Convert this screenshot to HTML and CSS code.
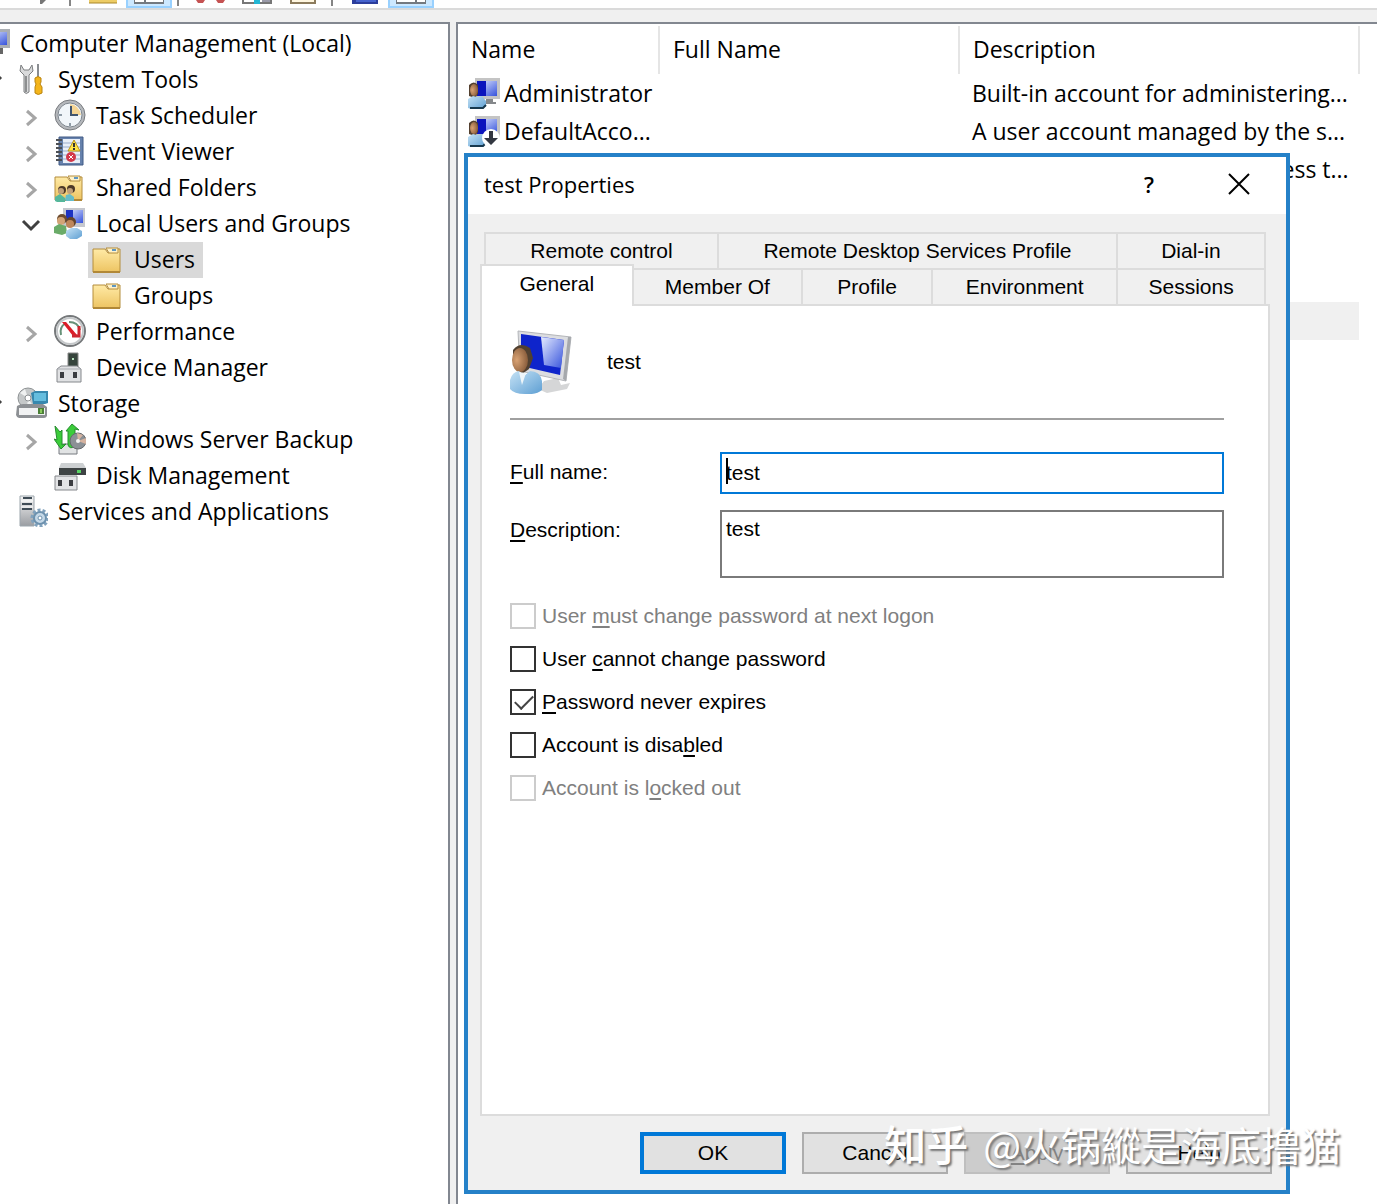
FILE: index.html
```html
<!DOCTYPE html>
<html lang="en">

<head>
  <meta charset="UTF-8" />
  <meta name="viewport" content="width=device-width, initial-scale=1" />
  <title>Computer Management</title>
  <link rel="stylesheet" href="styles.css">
</head>

<body>
  <!-- shared icons -->
  <svg class="sprite" aria-hidden="true">
    <defs>
      <linearGradient id="gScreen" x1="0" y1="0" x2="1" y2="1">
        <stop offset="0" stop-color="#e6ecff" />
        <stop offset="1" stop-color="#3552dc" />
      </linearGradient>
      <linearGradient id="gFolder" x1="0" y1="0" x2="0" y2="1">
        <stop offset="0" stop-color="#ffeaa6" />
        <stop offset="1" stop-color="#edc462" />
      </linearGradient>
      <linearGradient id="gShirt" x1="0" y1="0" x2="1" y2="1">
        <stop offset="0" stop-color="#c5e2f5" />
        <stop offset="1" stop-color="#5e9fd3" />
      </linearGradient>
      <linearGradient id="gMetal" x1="0" y1="0" x2="0" y2="1">
        <stop offset="0" stop-color="#f4f4f4" />
        <stop offset="1" stop-color="#9a9da2" />
      </linearGradient>
      <radialGradient id="gFace" cx="0.3" cy="0.5" r="0.8">
        <stop offset="0" stop-color="#d9a273" />
        <stop offset="1" stop-color="#7c5233" />
      </radialGradient>
    </defs>
    <symbol id="i-right" viewBox="0 0 16 20">
      <path d="M4 4l8 7-8 7" fill="none" stroke="#a6a6a6" stroke-width="3" />
    </symbol>
    <symbol id="i-down" viewBox="0 0 20 16">
      <path d="M2 4l8 8 8-8" fill="none" stroke="#404040" stroke-width="3" />
    </symbol>
    <symbol id="i-user" viewBox="0 0 32 32">
      <path d="M7 1h25v21H7z" fill="#c4c4c4" />
      <path d="M9 4h20v15H9z" fill="url(#gScreen)" />
      <path d="M9 4h9v15H9z" fill="#0b14bd" />
      <path d="M18 22h7v3h3v2H15v-2h3z" fill="#85888b" />
      <path d="M1 8q5-5 9 0v9l-3 4-6-2z" fill="#54402f" />
      <ellipse cx="6" cy="13" rx="4" ry="6" fill="url(#gFace)" />
      <path d="M0 31v-9l5-3 4 1 5-1 4 5v5l-4 3H3z" fill="url(#gShirt)" />
      <path d="M2 31h13l3-3" fill="none" stroke="#17394f" stroke-width="2" />
    </symbol>
    <symbol id="i-folder" viewBox="0 0 32 32">
      <path d="M1 6h12l3 4h1l3-4h8v23H1z" fill="url(#gFolder)" stroke="#b48d3d" />
      <path d="M14 5h12v5H17z" fill="#fff2c8" stroke="#b48d3d" />
      <path d="M20 7h4" stroke="#5f96c0" stroke-width="2" />
      <path d="M1 29h27" stroke="#b18837" stroke-width="2" />
    </symbol>
  </svg>

  <div class="toolbar">
    <button class="tool" aria-label="Forward"><svg viewBox="0 0 30 8"><path d="M14 0h6l-4 4h-2z" fill="#777" /></svg></button>
    <span class="sep"></span>
    <button class="tool" aria-label="Up one level"><svg viewBox="0 0 30 8"><path d="M1 0h28v3H1z" fill="#edcc65" /><path d="M1 3h28" stroke="#a9872b" /></svg></button>
    <button class="tool pressed" aria-label="Console tree"><svg viewBox="0 0 30 8"><path d="M0 0v3h30V0M11 0v3" fill="#fff" stroke="#737980" stroke-width="2" /></svg></button>
    <span class="sep"></span>
    <button class="tool" aria-label="Delete"><svg viewBox="0 0 30 8"><path d="M0 0h9l-2 3H2zM20 0h9l-2 3h-5z" fill="#c55252" /></svg></button>
    <button class="tool" aria-label="Properties"><svg viewBox="0 0 30 8"><path d="M1 0v3h28V0" fill="#fff" stroke="#777" stroke-width="2" /><path d="M12 0h6v4h-6z" fill="#22b7d5" /><path d="M20 0h8v2h-8z" fill="#9a9aa8" /></svg></button>
    <button class="tool" aria-label="Export list"><svg viewBox="0 0 30 8"><path d="M3 0v3h24V0" fill="#fff6df" stroke="#8c7b5c" stroke-width="2" /></svg></button>
    <span class="sep"></span>
    <button class="tool" aria-label="Help"><svg viewBox="0 0 30 8"><path d="M2 0h26v4H2z" fill="#2c3e9c" /><path d="M6 0h20v2H6z" fill="#4663cd" /></svg></button>
    <button class="tool pressed" aria-label="Action pane"><svg viewBox="0 0 30 8"><path d="M0 0v3h30V0M20 0v3" fill="#fff" stroke="#737980" stroke-width="2" /></svg></button>
  </div>

  <main class="panes">
    <nav class="pane tree-pane" aria-label="Console tree">
      <ul class="tree">
        <li>
          <div class="row"><span class="arrow"></span><a class="node" href="#"><svg class="icon" viewBox="0 0 32 32"><path d="M4 2h28v19H4z" fill="#aaaeb3" /><path d="M7 5h22v13H7z" fill="url(#gScreen)" /><path d="M20 21h5v6h-5z" fill="#666" /></svg>Computer Management (Local)</a></div>
          <ul>
            <li>
              <div class="row"><span class="arrow"><svg class="down"><use href="#i-down" /></svg></span><a class="node" href="#"><svg class="icon" viewBox="0 0 32 32">
                <path d="M5 2L4 8l4 4v17q2 3 5 0V12l4-4-1-6-3 5H8z" fill="#d9dadb" stroke="#7c7e80" stroke-width="1" />
                <path d="M10 13v16" stroke="#8d8f90" stroke-width="2" />
                <path d="M21 1h2v13h-2z" fill="#8a8d91" />
                <path d="M19 15q3-3 6 0v4l-1 2 2 3v6q-4 3-7 0v-6l1-3-1-2z" fill="#f4b51b" stroke="#b98411" />
              </svg>System Tools</a></div>
              <ul>
                <li><div class="row"><span class="arrow"><svg class="right"><use href="#i-right" /></svg></span><a class="node" href="#"><svg class="icon" viewBox="0 0 32 32">
                  <circle cx="16" cy="16" r="15" fill="#b5b8bc" stroke="#777a7e" />
                  <circle cx="16" cy="16" r="12" fill="#f1f6fa" stroke="#7f878f" />
                  <path d="M16 16V5q9 1 11 11z" fill="#f5d594" />
                  <path d="M17 7v9h7" fill="none" stroke="#42566f" stroke-width="2" />
                  <path d="M16 24v3M5 16h3" stroke="#8d9aa5" stroke-width="2" />
                </svg>Task Scheduler</a></div></li>
                <li><div class="row"><span class="arrow"><svg class="right"><use href="#i-right" /></svg></span><a class="node" href="#"><svg class="icon" viewBox="0 0 32 32">
                  <path d="M5 2h24v28H5z" fill="#6681ac" stroke="#405b85" />
                  <path d="M9 4h17v24H9z" fill="#e9eff8" />
                  <path d="M9 8h17M9 12h17M9 16h17M9 20h17M9 24h17" stroke="#9badcb" />
                  <path d="M2 5h6M2 9h6M2 13h6M2 17h6M2 21h6M2 25h6" stroke="#4c4f54" stroke-width="2" />
                  <path d="M20 5l6 11H14z" fill="#ffe447" stroke="#ba941c" />
                  <path d="M20 8v4M20 13v2" stroke="#333" stroke-width="2" />
                  <circle cx="17" cy="22" r="5" fill="#d3384a" />
                  <path d="M15 20l4 4m0-4l-4 4" stroke="#fff" />
                </svg>Event Viewer</a></div></li>
                <li><div class="row"><span class="arrow"><svg class="right"><use href="#i-right" /></svg></span><a class="node" href="#"><svg class="icon" viewBox="0 0 32 32">
                  <use href="#i-folder" width="32" height="32" />
                  <circle cx="8" cy="19" r="4" fill="#4c3827" /><circle cx="7" cy="20" r="3" fill="#c1a078" />
                  <circle cx="17" cy="18" r="4" fill="#4c3827" /><circle cx="16" cy="20" r="3" fill="#c1a078" />
                  <path d="M1 30v-4l5-3 5 4v4H3z" fill="#55b79b" /><path d="M11 29l1-5 4-1 4 3v4h-8z" fill="#65bbc8" />
                </svg>Shared Folders</a></div></li>
                <li>
                  <div class="row"><span class="arrow"><svg class="down"><use href="#i-down" /></svg></span><a class="node" href="#"><svg class="icon" viewBox="0 0 32 32">
                    <path d="M9 1h22v19H9z" fill="#c6c8ce" /><path d="M12 3h17v13H12z" fill="url(#gScreen)" /><path d="M12 3h7v12h-7z" fill="#1d32c2" />
                    <circle cx="8" cy="12" r="5" fill="#6d4c30" /><circle cx="7" cy="14" r="4" fill="#d3a477" />
                    <path d="M0 26v-6l5-3 7 2 1 7-5 2z" fill="#6aab68" />
                    <circle cx="17" cy="15" r="5" fill="#63442c" /><circle cx="16" cy="17" r="4" fill="#be875b" />
                    <path d="M12 29v-5l5-3 6 0 5 3v5l-5 3h-7z" fill="url(#gShirt)" />
                  </svg>Local Users and Groups</a></div>
                  <ul>
                    <li><div class="row"><span class="arrow"></span><a class="node selected" href="#"><svg class="icon"><use href="#i-folder" /></svg>Users</a></div></li>
                    <li><div class="row"><span class="arrow"></span><a class="node" href="#"><svg class="icon"><use href="#i-folder" /></svg>Groups</a></div></li>
                  </ul>
                </li>
                <li><div class="row"><span class="arrow"><svg class="right"><use href="#i-right" /></svg></span><a class="node" href="#"><svg class="icon" viewBox="0 0 32 32">
                  <circle cx="16" cy="16" r="15" fill="#fff" stroke="#75787a" stroke-width="2" />
                  <circle cx="16" cy="16" r="13" fill="none" stroke="#c4c7c9" stroke-width="2" />
                  <path d="M7 20q-2-8 5-12M15 7q9 0 11 8" fill="none" stroke="#669178" stroke-width="2" />
                  <path d="M8 7l4 0 11 13-4 1z" fill="#db1e28" />
                  <path d="M25 11v10h-7" fill="none" stroke="#ce2731" stroke-width="3" />
                </svg>Performance</a></div></li>
                <li><div class="row"><span class="arrow"></span><a class="node" href="#"><svg class="icon" viewBox="0 0 32 32">
                  <path d="M14 2h10v14H14z" fill="#36443c" stroke="#888" /><path d="M18 7h2v2h-2z" fill="#b6e3bd" />
                  <path d="M3 18l4-3h16l4 3v13H3z" fill="#e0e1e3" stroke="#85888c" /><path d="M3 18h24" stroke="#a8abb0" />
                  <path d="M6 21h4v6H6zM19 21h4v6h-4z" fill="#3b3d41" />
                </svg>Device Manager</a></div></li>
              </ul>
            </li>
            <li>
              <div class="row"><span class="arrow"><svg class="down"><use href="#i-down" /></svg></span><a class="node" href="#"><svg class="icon" viewBox="0 0 32 32">
                <circle cx="12" cy="11" r="10" fill="#c5c8c9" stroke="#8e9294" /><path d="M12 11L4 6l5-4zM12 11l5 8-6 1z" fill="#eff1f1" /><circle cx="12" cy="11" r="3" fill="#fff" stroke="#8e9294" />
                <path d="M15 6l4-2h13v12l-3 1H17z" fill="#3788ae" /><path d="M18 6h12v8H18z" fill="#65bdde" />
                <path d="M1 19q3-2 6-2h20l4 3v9q-1 2-3 2H3q-2 0-3-3z" fill="#8d9094" /><path d="M3 21h26v7H3z" fill="#f1f2f3" />
                <path d="M22 21h6v6h-6z" fill="#4b8037" /><path d="M24 22h2v4h-2z" fill="#89ca5b" />
              </svg>Storage</a></div>
              <ul>
                <li><div class="row"><span class="arrow"><svg class="right"><use href="#i-right" /></svg></span><a class="node" href="#"><svg class="icon" viewBox="0 0 32 32">
                  <path d="M5 21h18v10H5z" fill="#e1e3e4" stroke="#777b80" />
                  <path d="M1 3l5 6 2-2v15l4-1-5 5-7-10 3 1z" fill="#3bcc3a" stroke="#268d2f" />
                  <path d="M12 8l6-7 7 6-4-1v17q-5 4-7-1V8z" fill="#3bcc3a" stroke="#268d2f" />
                  <circle cx="24" cy="18" r="8" fill="#8b9095" stroke="#676a6d" /><path d="M24 18l8-3v6zM24 18l-1-8 6 2z" fill="#d6b3a0" /><circle cx="24" cy="18" r="2" fill="#f3f3f3" />
                </svg>Windows Server Backup</a></div></li>
                <li><div class="row"><span class="arrow"></span><a class="node" href="#"><svg class="icon" viewBox="0 0 32 32">
                  <path d="M7 4h22l3 5H5z" fill="#cdd0d2" /><path d="M5 9h27v7H5z" fill="#3e4344" /><path d="M23 11h4v3h-4z" fill="#58d363" />
                  <path d="M1 17h22v14H1z" fill="#e2e3e5" stroke="#85888c" /><path d="M4 21h4v6H4zM15 21h4v6h-4z" fill="#3b3d41" />
                </svg>Disk Management</a></div></li>
              </ul>
            </li>
            <li><div class="row"><span class="arrow"></span><a class="node" href="#"><svg class="icon" viewBox="0 0 32 32">
              <path d="M4 1h14v30H4z" fill="url(#gMetal)" stroke="#9ca6ad" /><path d="M7 3h9M6 9h10M6 14h10" stroke="#3f4c56" stroke-width="2" /><path d="M5 6h12M5 12h12" stroke="#fff" />
              <circle cx="24" cy="23" r="8" fill="none" stroke="#81a2bd" stroke-width="3" stroke-dasharray="3 2" />
              <circle cx="24" cy="23" r="6" fill="#c5d8e7" stroke="#6c91ae" stroke-width="2" /><circle cx="24" cy="23" r="2" fill="#fff" stroke="#6c91ae" />
            </svg>Services and Applications</a></div></li>
          </ul>
        </li>
      </ul>
    </nav>

    <section class="pane list-pane">
      <table class="users">
        <thead>
          <tr><th class="col-name">Name</th><th class="col-full">Full Name</th><th>Description</th></tr>
        </thead>
        <tbody>
          <tr><td><span class="user"><svg class="icon"><use href="#i-user" /></svg>Administrator</span></td><td></td><td>Built-in account for administering...</td></tr>
          <tr><td><span class="user"><svg class="icon" viewBox="0 0 32 32"><use href="#i-user" width="32" height="32" /><circle cx="23" cy="23" r="9" fill="#fff" /><path d="M21 16h4v7h5l-7 7-7-7h5z" fill="#333741" /></svg>DefaultAcco...</span></td><td></td><td>A user account managed by the s...</td></tr>
          <tr><td></td><td></td><td>Built-in account for guest access t...</td></tr>
          <tr><td></td><td></td><td></td></tr>
          <tr><td></td><td></td><td></td></tr>
          <tr><td></td><td></td><td></td></tr>
          <tr><td></td><td></td><td class="current"></td></tr>
        </tbody>
      </table>
    </section>
  </main>

  <form class="dialog" role="dialog" aria-labelledby="dialogTitle">
    <header class="titlebar">
      <h1 id="dialogTitle">test Properties</h1>
      <button type="button" class="caption" aria-label="Help">?</button>
      <button type="button" class="caption" aria-label="Close"><svg viewBox="0 0 22 22"><path d="M1 1l20 20M21 1L1 21" stroke="#000" stroke-width="2" /></svg></button>
    </header>

    <div class="dialog-body">
      <div class="tabs tabs-back" role="tablist">
        <button type="button" role="tab" class="tab w-remote">Remote control</button>
        <button type="button" role="tab" class="tab w-desktop">Remote Desktop Services Profile</button>
        <button type="button" role="tab" class="tab w-small">Dial-in</button>
      </div>
      <div class="tabs tabs-front" role="tablist">
        <button type="button" role="tab" class="tab active" aria-selected="true">General</button>
        <button type="button" role="tab" class="tab w-member">Member Of</button>
        <button type="button" role="tab" class="tab w-profile">Profile</button>
        <button type="button" role="tab" class="tab w-env">Environment</button>
        <button type="button" role="tab" class="tab w-small">Sessions</button>
      </div>

      <div class="tab-panel" role="tabpanel">
        <div class="account">
          <svg class="account-icon" viewBox="0 0 64 64">
            <path d="M34 51l14-3 3 7 9-2-3 6-20 4-9-4z" fill="#d5d6d7" />
            <path d="M8 1l53 6-5 44-46-10z" fill="#dcdde0" stroke="#b4b6ba" />
            <path d="M56 51l5-44-3 0-5 42z" fill="#a5a8ac" />
            <path d="M11 4l43 6-4 35-39-9z" fill="#0e24cb" />
            <path d="M31 7l23 3-3 28-17-3z" fill="url(#gScreen)" />
            <path d="M3 20q7-9 17-2l3 10-4 11-7 5-9-9z" fill="#514030" />
            <ellipse cx="10" cy="30" rx="8" ry="12" fill="url(#gFace)" />
            <path d="M0 59V50q2-8 9-9l5 5 6-5q10 0 12 10v9q-6 5-17 4-11 0-15-5z" fill="url(#gShirt)" />
            <path d="M9 42l3 13 4-12z" fill="#eef5f9" />
          </svg>
          <span>test</span>
        </div>

        <div class="fields">
          <label for="fullName"><u>F</u>ull name:</label>
          <input type="text" id="fullName" class="focused" value="test">
          <label for="description"><u>D</u>escription:</label>
          <textarea id="description">test</textarea>
        </div>

        <div class="options">
          <label class="disabled"><input type="checkbox" disabled><span>User <u>m</u>ust change password at next logon</span></label>
          <label><input type="checkbox"><span>User <u>c</u>annot change password</span></label>
          <label><input type="checkbox" checked><span><u>P</u>assword never expires</span></label>
          <label><input type="checkbox"><span>Account is disa<u>b</u>led</span></label>
          <label class="disabled"><input type="checkbox" disabled><span>Account is l<u>o</u>cked out</span></label>
        </div>
      </div>
    </div>

    <footer class="actions">
      <button type="button" class="default">OK</button>
      <button type="button">Cancel</button>
      <button type="button" disabled><u>A</u>pply</button>
      <button type="button">Help</button>
    </footer>
  </form>

  <div class="watermark"><span>知乎</span> @火锅縱是海底撸猫</div>
</body>

</html>
```

FILE: styles.css
```css
* {
  box-sizing: border-box;
}

body {
  margin: 0;
  min-height: 100vh;
  display: flex;
  flex-direction: column;
  position: relative;
  overflow: hidden;
  background: #f0f0f0;
  color: #000;
  font-family: "Open Sans", "Noto Sans", sans-serif;
  font-size: 23px;
}

button,
input,
textarea {
  font: inherit;
  color: inherit;
  margin: 0;
}

ul {
  list-style: none;
  margin: 0;
  padding: 0;
}

.sprite {
  position: absolute;
  width: 0;
  height: 0;
}

.icon {
  width: 32px;
  height: 32px;
  flex: none;
}

/* toolbar */
.toolbar {
  display: flex;
  height: 10px;
  padding-left: 18px;
  background: #fff;
  border-bottom: 2px solid #dadada;
}

.tool {
  width: 46px;
  height: 8px;
  padding: 0 8px;
  border: none;
  background: none;
  display: flex;
}

.tool svg {
  width: 30px;
  height: 8px;
}

.tool.pressed {
  background: #cce8ff;
  border: solid #99d1ff;
  border-width: 0 2px 2px;
  padding: 0 6px;
}

.sep {
  width: 2px;
  height: 6px;
  margin: 0 9px 0 5px;
  background: #858585;
}

/* panes */
.panes {
  flex: 1;
  display: flex;
  gap: 6px;
  padding-top: 12px;
}

.pane {
  background: #fff;
  border-top: 2px solid #828790;
  padding-top: 2px;
  overflow: hidden;
}

.tree-pane {
  width: 450px;
  flex: none;
  border-right: 2px solid #828790;
}

.list-pane {
  flex: 1;
  border-left: 2px solid #828790;
}

/* tree */
.tree {
  margin-left: -60px;
}

.tree ul {
  padding-left: 38px;
}

.row {
  display: flex;
  height: 36px;
}

.arrow {
  width: 30px;
  margin-right: 4px;
  padding-top: 2px;
  display: flex;
  align-items: center;
  justify-content: center;
}

.right {
  width: 16px;
  height: 20px;
}

.down {
  width: 20px;
  height: 16px;
}

.node {
  display: flex;
  align-items: center;
  gap: 10px;
  padding: 0 8px 2px 4px;
  color: inherit;
  text-decoration: none;
  white-space: nowrap;
}

.node.selected {
  background: #d9d9d9;
}

/* user list */
.users {
  width: calc(100% - 17px);
  border-collapse: collapse;
  table-layout: fixed;
}

.users th {
  height: 48px;
  padding: 0 0 2px 13px;
  border-right: 2px solid #e5e5e5;
  text-align: left;
  font-weight: normal;
}

.col-name {
  width: 201px;
}

.col-full {
  width: 300px;
}

.users td {
  height: 38px;
  padding: 0 0 0 13px;
  white-space: nowrap;
}

.users td:first-child {
  padding-left: 10px;
}

.user {
  display: flex;
  align-items: center;
  gap: 4px;
}

.current {
  background: #f0f0f0;
}

/* properties dialog */
.dialog {
  position: absolute;
  left: 464px;
  top: 153px;
  width: 826px;
  border: 4px solid #2581c8;
  background: #f0f0f0;
  font-family: "Liberation Sans", Arial, sans-serif;
  font-size: 21px;
}

.titlebar {
  display: flex;
  align-items: center;
  height: 57px;
  padding: 0 2px 4px 16px;
  background: #fff;
  font-family: "Open Sans", "Noto Sans", sans-serif;
  font-size: 22px;
}

.titlebar h1 {
  flex: 1;
  margin: 0;
  font-size: 22px;
  font-weight: normal;
}

.caption {
  width: 90px;
  height: 52px;
  padding: 0;
  border: none;
  background: none;
  font-weight: 600;
}

.caption svg {
  display: block;
  margin: 0 auto;
  width: 22px;
  height: 22px;
}

.dialog-body {
  padding: 18px 16px 0 12px;
}

.tabs {
  display: flex;
  height: 36px;
}

.tabs-back {
  margin: 0 4px;
}

.tabs-front {
  margin-right: 4px;
}

.tab {
  padding: 0;
  border: solid #dcdcdc;
  border-width: 2px 2px 0 0;
  background: #f0f0f0;
}

.tabs-back .tab:first-child {
  border-left-width: 2px;
}

.tab.active {
  position: relative;
  flex: 152 1 0;
  height: 42px;
  margin-top: -4px;
  padding-bottom: 4px;
  border-left-width: 2px;
  background: #fff;
}

.w-remote {
  flex: 234 1 0;
}

.w-desktop {
  flex: 402 1 0;
}

.w-small {
  flex: 148 1 0;
}

.w-member {
  flex: 170 1 0;
}

.w-profile {
  flex: 130 1 0;
}

.w-env {
  flex: 186 1 0;
}

.tab-panel {
  min-height: 812px;
  padding: 24px 44px 24px 28px;
  border: 2px solid #dcdcdc;
  background: #fff;
}

.account {
  display: flex;
  align-items: center;
  gap: 33px;
  padding-bottom: 24px;
  border-bottom: 2px solid #a0a0a0;
}

.account-icon {
  width: 64px;
  height: 64px;
}

.fields {
  display: grid;
  grid-template-columns: 210px 1fr;
  row-gap: 16px;
  margin-top: 32px;
}

.fields label {
  line-height: 40px;
}

.fields input,
.fields textarea {
  width: 100%;
  height: 42px;
  padding: 0 4px;
  border: 2px solid #7a7a7a;
  border-radius: 0;
  outline: none;
  background: #fff;
}

/* caret stands before the first letter */
.fields .focused {
  border-color: #0078d7;
  background: #fff linear-gradient(#000, #000) 4px 4px / 2px 26px no-repeat;
}

.fields textarea {
  display: block;
  height: 68px;
  padding-top: 5px;
  resize: none;
  overflow: hidden;
}

u {
  text-underline-offset: 3px;
  text-decoration-thickness: 2px;
}

.options {
  margin-top: 16px;
}

.options label {
  display: flex;
  align-items: center;
  gap: 6px;
  height: 43px;
}

.options input {
  appearance: none;
  width: 26px;
  height: 26px;
  border: 2px solid #333;
  background: #fff;
}

.options input:checked::before {
  content: "";
  display: block;
  width: 16px;
  height: 8px;
  margin: 4px 0 0 3px;
  border: solid #444;
  border-width: 0 0 2px 2px;
  transform: rotate(-45deg);
}

.options .disabled {
  color: #808080;
}

.options .disabled input {
  border-color: #ccc;
}

.actions {
  display: flex;
  justify-content: flex-end;
  gap: 16px;
  padding: 16px 14px;
}

.actions button {
  width: 146px;
  height: 42px;
  padding: 0;
  border: 2px solid #adadad;
  background: #e1e1e1;
}

.actions .default {
  border: 4px solid #0078d7;
}

.actions button:disabled {
  border-color: #bfbfbf;
  background: #ccc;
  color: #838383;
}

.watermark {
  position: absolute;
  right: 36px;
  bottom: 30px;
  color: #fff;
  font-family: "Noto Sans CJK SC", sans-serif;
  font-size: 40px;
  line-height: 60px;
  text-shadow: 2px 2px 2px #777;
  pointer-events: none;
}

.watermark span {
  margin-right: 6px;
  font-size: 42px;
  font-weight: 500;
}
```
